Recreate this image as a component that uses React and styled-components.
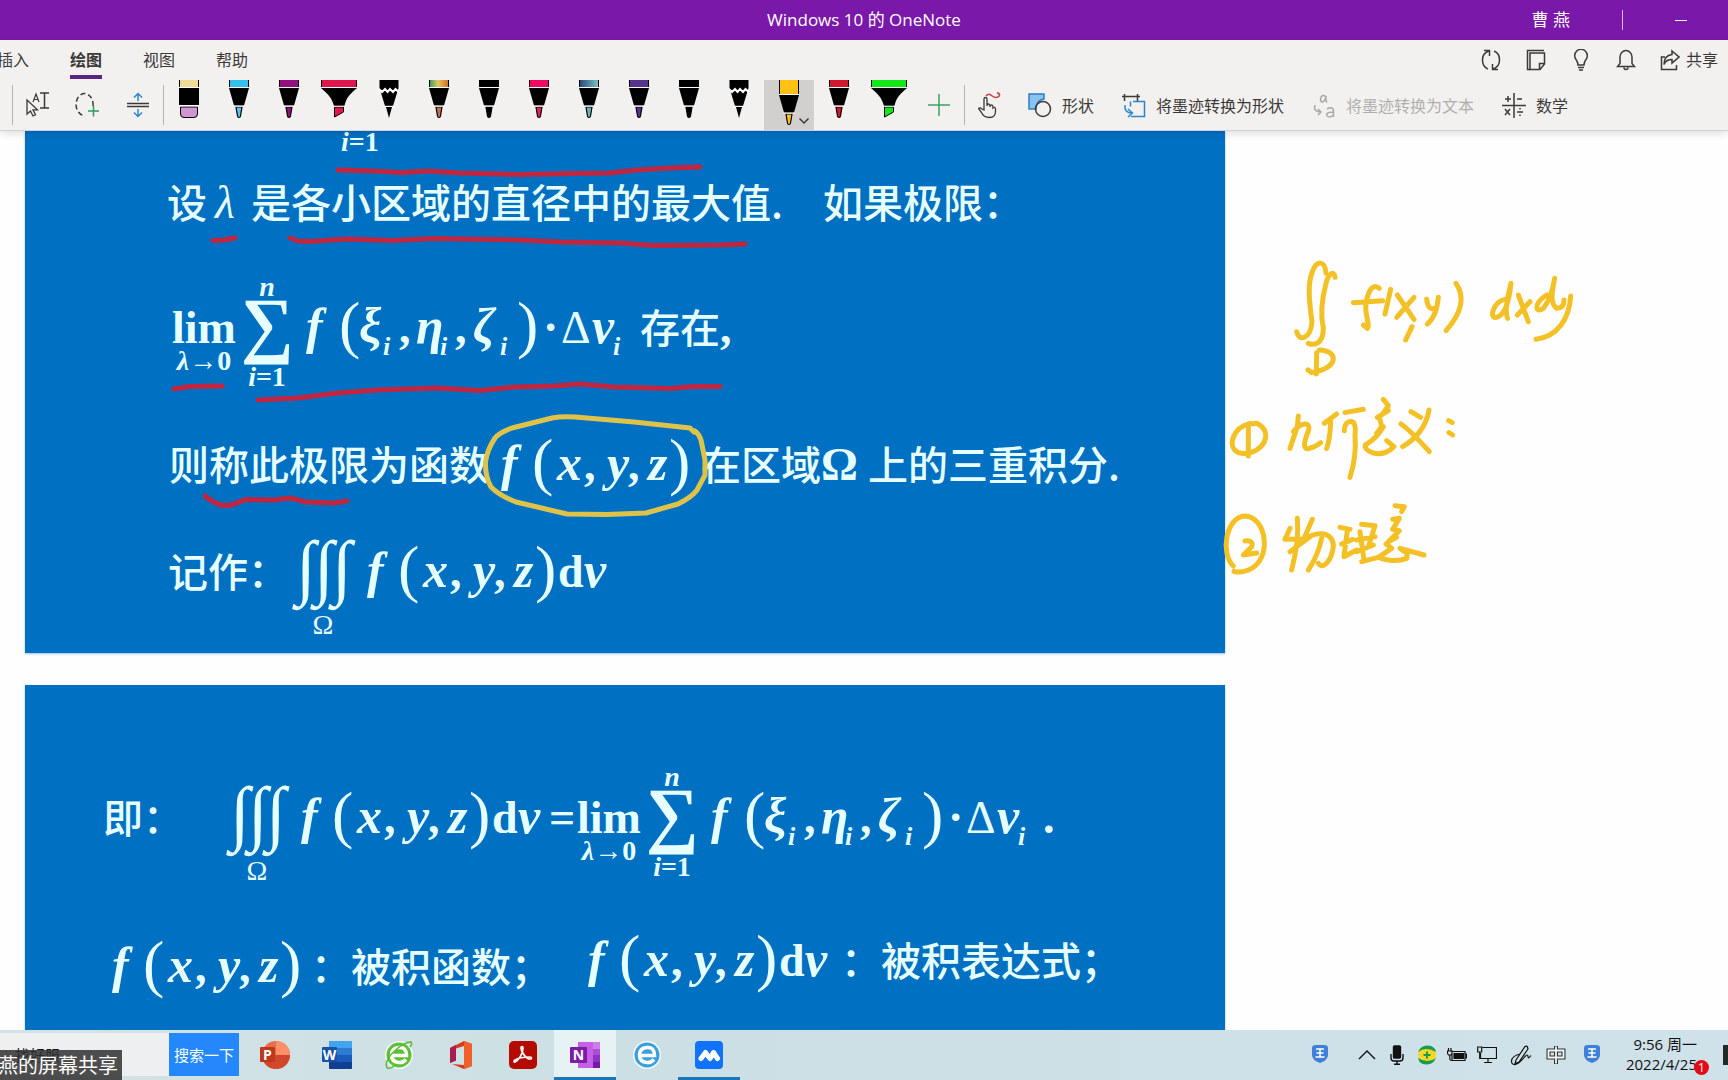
import React from 'react';
import styled, { createGlobalStyle, css } from 'styled-components';

const ui = '"Open Sans", "Noto Sans CJK SC", sans-serif';
const serif = '"Liberation Serif", "Noto Sans CJK SC", serif';

const Global = createGlobalStyle`
  * { box-sizing: border-box; }
  body { margin: 0; font-family: ${ui}; background: #fefefe; }
  button { border: 0; padding: 0; background: none; font: inherit; color: inherit; }
`;

const Window = styled.div`
  display: flex;
  flex-direction: column;
  height: 100vh;
  overflow: hidden;
`;

/* ---------- title bar ---------- */
const TitleBar = styled.header`
  display: grid;
  grid-template-columns: 1fr auto 1fr;
  align-items: center;
  height: 40px;
  flex: none;
  background: #7a19a9;
  color: #fff;
  font-size: 17px;
  line-height: 24px;
`;
const Title = styled.h1`
  grid-column: 2;
  margin: 0;
  font: inherit;
`;
const Account = styled.div`
  display: flex;
  align-items: center;
  justify-content: flex-end;
`;
const Divider = styled.span`
  width: 1px;
  height: 20px;
  margin-left: 52px;
  background: #d9b8ea;
`;
const Minimise = styled.button`
  display: flex;
  align-items: center;
  justify-content: flex-end;
  width: 105px;
  height: 40px;
  padding-right: 41px;
`;
const Dash = styled.span`
  width: 12px;
  height: 1px;
  background: #fff;
`;

/* ---------- ribbon ---------- */
const Ribbon = styled.div`
  position: relative;
  z-index: 2;
  flex: none;
  background: #f3f1f0;
  color: #3b3a39;
  border-bottom: 1px solid #cfd3d8;
  box-shadow: 0 2px 8px rgba(0, 0, 0, 0.14);
  font-size: 16px;
  line-height: 24px;
`;
const TabRow = styled.div`
  display: flex;
  justify-content: space-between;
  height: 40px;
`;
const Tabs = styled.nav`
  display: flex;
  gap: 41px;
  margin-left: -3px;
`;
const Tab = styled.button`
  height: 39px;
  padding-top: 4px;
  border-bottom: 4px solid ${(p) => (p.$active ? '#5c2482' : 'transparent')};
  font-weight: ${(p) => (p.$active ? 700 : 400)};
`;
const Actions = styled.div`
  display: flex;
  align-items: center;
  padding-right: 10px;
`;
const Action = styled.button`
  display: flex;
  align-items: center;
  justify-content: center;
  gap: 6px;
  min-width: 45px;
  height: 40px;
`;
const ShareAction = styled(Action)`
  margin-left: 11px;
`;
const ToolRow = styled.div`
  display: flex;
  align-items: flex-start;
  height: 50px;
`;
const Sep = styled.span`
  width: 1px;
  height: 40px;
  margin-top: 5px;
  background: #b5b3b2;
`;
const LeadSep = styled(Sep)`
  margin-left: 12px;
`;
const Tool = styled.button`
  display: flex;
  align-items: center;
  justify-content: center;
  width: 50px;
  height: 50px;
  background: ${(p) => (p.$selected ? '#d2d0ce' : 'transparent')};
`;
const TextTools = styled.div`
  display: flex;
  gap: 28px;
  margin-left: 13px;
`;
const TextTool = styled.button`
  display: flex;
  align-items: center;
  gap: 10px;
  height: 52px;
  color: ${(p) => (p.$off ? '#b1afad' : '#3b3a39')};
  white-space: nowrap;
`;

/* ---------- note canvas ---------- */
const Canvas = styled.main`
  position: relative;
  flex: 1;
  min-height: 0;
  overflow: hidden;
  padding-left: 25px;
`;
const Slide = styled.section`
  width: 1200px;
  height: 522px;
  padding-top: ${(p) => (p.$top || 0)}px;
  margin-bottom: 32px;
  background: #0070c3;
  color: #e6ffff;
  box-shadow: 0 1px 2px #9cc4e6;
  font-family: ${serif};
`;
const Line = styled.div`
  height: ${(p) => (p.$h || 100)}px;
  line-height: ${(p) => (p.$h || 100)}px;
  margin-top: ${(p) => (p.$mt || 0)}px;
  padding-left: ${(p) => p.$pl}px;
  font-size: 46px;
  white-space: nowrap;
`;
const Pair = styled.div`
  display: flex;
  align-items: flex-start;
  margin-top: 45px;
`;
const Han = styled.span`
  display: inline-block;
  line-height: 0;
  width: ${(p) => (p.$w ? p.$w + 'px' : 'auto')};
  font-family: "Noto Sans CJK SC", sans-serif;
  font-size: 40px;
  font-weight: 500;
`;
const Cell = styled.span`
  display: inline-block;
  width: ${(p) => p.$w}px;
  line-height: 0;
  font-size: ${(p) => (p.$it && !p.$light ? 50 : 46)}px;
  font-weight: ${(p) => (p.$light ? 400 : 700)};
  font-style: ${(p) => (p.$it ? 'italic' : 'normal')};
`;
const Paren = styled(Cell)`
  font-size: 64px;
  font-weight: 400;
  vertical-align: -3px;
`;
const Sub = styled(Cell)`
  font-size: 26px;
  font-style: italic;
  vertical-align: -12px;
`;
const Stack = styled.span`
  display: inline-flex;
  flex-direction: column;
  align-items: center;
  width: ${(p) => p.$w}px;
  margin-right: ${(p) => p.$mr}px;
  ${(p) => p.$middle && css`vertical-align: middle;`}
  ${(p) => p.$low && css`vertical-align: -4px;`}
`;
const Small = styled.span`
  font-size: 28px;
  line-height: ${(p) => p.$lh || 22}px;
  font-weight: ${(p) => (p.$light ? 400 : 700)};
`;
const Lim = styled.span`
  font-size: 46px;
  line-height: 46px;
  font-weight: 700;
`;
const Sigma = styled.span`
  font-size: 74px;
  line-height: 52px;
  padding-bottom: 16px;
  font-weight: 700;
`;
const Integral = styled.span`
  display: grid;
  grid-template-columns: repeat(3, 18px);
  font-size: 72px;
  line-height: 64px;
`;

const Fxyz = ({ dv }) => (
  <>
    <Cell $w={31} $it>f</Cell>
    <Paren $w={25}>(</Paren>
    <Cell $w={27} $it>x</Cell>
    <Cell $w={23}>,</Cell>
    <Cell $w={21} $it>y</Cell>
    <Cell $w={20}>,</Cell>
    <Cell $w={21} $it>z</Cell>
    <Paren $w={23}>)</Paren>
    {dv && (
      <>
        <Cell $w={26}>d</Cell>
        <Cell $w={23} $it>v</Cell>
      </>
    )}
  </>
);

const LimSum = () => (
  <>
    <Stack $w={64} $mr={7}>
      <Lim>lim</Lim>
      <Small $lh={20}><i>λ</i>→0</Small>
    </Stack>
    <Stack $w={48} $mr={15} $middle>
      <Small><i>n</i></Small>
      <Sigma>∑</Sigma>
      <Small><i>i</i>=1</Small>
    </Stack>
    <Cell $w={33} $it>f</Cell>
    <Paren $w={20}>(</Paren>
    <Cell $w={24} $it>ξ</Cell>
    <Sub $w={16}>i</Sub>
    <Cell $w={17}>,</Cell>
    <Cell $w={24} $it>η</Cell>
    <Sub $w={15}>i</Sub>
    <Cell $w={18}>,</Cell>
    <Cell $w={27} $it>ζ</Cell>
    <Sub $w={17}>i</Sub>
    <Paren $w={26}>)</Paren>
    <Cell $w={18}>·</Cell>
    <Cell $w={31} $light>Δ</Cell>
    <Cell $w={21} $it>v</Cell>
    <Sub $w={9}>i</Sub>
  </>
);

const TripleIntegral = () => (
  <Stack $w={58} $mr={15} $low>
    <Integral><span>∫</span><span>∫</span><span>∫</span></Integral>
    <Small $lh={52} $light>Ω</Small>
  </Stack>
);

const InkLayer = styled.svg`
  position: absolute;
  left: 0;
  top: 0;
  pointer-events: none;
`;

const Ink = () => (
  <InkLayer width="1728" height="899" viewBox="0 131 1728 899" fill="none" strokeLinecap="round" strokeLinejoin="round" aria-hidden="true">
    <g stroke="#c0263f" strokeWidth="5">
      <path d="M338 170L372 171L403 172.5L428 171L460 173L520 174.5L573 173.5L610 173L637 170L670 168L700 167" />
      <path d="M213 240.5L224 240L235 238" />
      <path d="M290 238L298 241L310 241.5L346 239L393 240.5L432 238.5L520 240L560 242L620 243L653 245.5L720 245L745 244" />
      <path d="M174 389L190 386.5L222 386" />
      <path d="M258 400L298 398L338 393L377 390L437 388L480 390.5L516 387L555 386L579 384L614 387L670 388.5L694 386.5L720 386.5" />
      <path d="M205 496Q216 505 224 505.5T245 499.500L274 500L290 498L306 502L334 503L347 501" />
    </g>
    <path stroke="#dfc349" strokeWidth="5" d="M694 432L690 428L634 422L575 417Q562 416 552 418L512 428Q499 433 495 438Q487 450 485.500 462Q485 476 491 487Q500 496 516 502L567 514L607 514.500L646 513L678 504Q692 497 697 490L705 475L705 460L701 440Q699 434 695 431" />
    <g transform="translate(1210 240) scale(.33333)" stroke="#f3c126" strokeWidth="15">
      <path d="M348 100C345 60 320 60 307 95C290 135 300 200 306 245C302 300 265 305 260 275" />
      <path d="M375 112C372 90 355 100 348 130C335 180 332 230 340 265C340 310 315 318 295 310" />
      <path d="M320 338L319 402M328 330C385 332 390 382 305 398L294 390" />
      <path d="M508 145C490 128 475 150 468 190C463 225 482 258 472 265L460 255M430 188L518 182M542 148L525 222" />
      <path d="M562 165L612 238M612 172L560 232M606 260L587 300M650 178Q655 212 672 205M685 172Q680 230 652 252M738 130Q780 190 708 272" />
      <path d="M885 178C850 185 835 238 860 232C890 225 900 160 903 130C890 180 885 220 893 235M925 165L955 245M960 185L922 225" />
      <path d="M1010 165C970 190 975 222 1000 205C1020 180 1030 140 1034 115C1025 160 1020 190 1040 205Q1062 205 1062 180M1082 168C1078 240 1040 290 978 298" />
      <path d="M120 550C70 562 48 620 85 638C140 652 188 598 158 563C145 548 135 548 128 552M115 560L115 648" />
      <path d="M265 528L262 560L240 625M250 575C275 545 302 545 296 570C280 610 278 632 298 625Q315 622 332 608" />
      <path d="M380 522L343 550M362 545Q360 600 350 625M405 518L460 508M403 572Q403 550 418 545Q440 540 435 585Q440 650 420 712" />
      <path d="M520 478L535 497L518 522M502 532L535 512M510 538L515 560L500 580M520 560Q500 595 466 615C460 632 505 655 540 630L552 620L530 602" />
      <path d="M603 515L632 532M657 510Q645 580 578 620M573 552Q600 570 658 635M716 542L727 548M717 578L728 585" />
      <path d="M70 978C30 940 48 830 105 828C170 830 190 960 115 990Q90 1000 72 994M105 903Q132 900 125 920L100 945L140 939" />
      <path d="M240 865L225 898L285 898M262 835Q268 900 245 990M240 935L300 890M307 838L278 905C310 870 372 872 370 920C365 960 340 992 325 970M335 895Q325 945 295 990" />
      <path d="M390 862L420 868M395 912L428 898M412 870L402 950L440 930M455 853L495 857L475 920M440 900L495 890M450 875L462 960M440 935L490 915M455 965L505 952" />
      <path d="M555 797L583 800L575 815M548 838L568 835L548 868L568 872L535 905L560 892M528 912L545 925L505 952Q555 970 590 955L592 940L570 925L642 945" />
    </g>
  </InkLayer>
);

/* ---------- ribbon drawings ---------- */
const gradients = (
  <defs>
    <linearGradient id="rainbow"><stop offset="0" stopColor="#2b9a6b" /><stop offset=".45" stopColor="#e8c65a" /><stop offset="1" stopColor="#cf6a2c" /></linearGradient>
    <linearGradient id="galaxy"><stop offset="0" stopColor="#29457a" /><stop offset="1" stopColor="#7fc6c4" /></linearGradient>
  </defs>
);

const Pen = ({ cap, tip, kind, down }) => {
  const o = down ? 7 : 0;
  if (kind === 'eraser')
    return (
      <svg width="50" height="50" viewBox="0 0 50 50">
        <path fill={cap} d="M15 0h20v7H15z" />
        <path d="M15.500 0v7M34.500 0v7" stroke="#000" />
        <path d="M15 8h20v17H15z" />
        <path d="M16.500 27h17v7q0 3.500-3.500 3.500H20q-3.500 0-3.500-3.500z" fill={tip} stroke="#000" />
        <path d="M15 7.500h20M15 25.800h20" stroke="#fff" />
      </svg>
    );
  if (kind === 'marker')
    return (
      <svg width="50" height="50" viewBox="0 0 50 50">
        <path fill={cap} d="M7 0h36v7H7z" />
        <path d="M7.500 0v7M42.500 0v7" stroke="#000" />
        <path d="M7 8h36C36 14 32 18 30.500 26H20C18 18 14 14 7 8z" />
        <path d="M20.500 27h9v5l-9 5z" fill={tip} stroke="#000" />
        <path d="M7 7.500h36M18 26.200h14" stroke="#fff" />
      </svg>
    );
  if (kind === 'pencil')
    return (
      <svg width="50" height="50" viewBox="0 0 50 50">
        <path d="M15.500 0h19v8L29 26h-8L15.500 8z" />
        <path d="M15 9l3 3 3-3 2.500 3 2.500-3 3 3 2.500-3 3 3" fill="none" stroke="#fff" strokeWidth="2" />
        <path d="M22 27h6l-3 11z" />
        <path d="M19 26.300h12" stroke="#fff" />
      </svg>
    );
  return (
    <svg width="50" height="50" viewBox="0 0 50 50">
      {gradients}
      <path fill={cap} d={`M15 0h20v${7 + o}H15z`} />
      <path d={`M15.500 0v${7 + o}M34.500 0v${7 + o}`} stroke="#000" />
      <g transform={`translate(0 ${o})`}>
        <path d="M15 8h20l-5 17.500H20z" />
        <path d="M22 27h6l-1.500 9q-.2 1.500-1.500 1.500t-1.500-1.500z" fill={tip} stroke="#000" strokeWidth="1.200" />
        <path d="M15 7.500h20M19 26.200h12" stroke="#fff" />
      </g>
      {down && <path d="M35.500 38.500l4.500 4.500 4.500-4.500" fill="none" stroke="#3b3a39" strokeWidth="1.500" />}
    </svg>
  );
};

const pens = [
  { name: '橡皮擦', kind: 'eraser', cap: '#f0dc97', tip: '#cf96d4' },
  { name: '浅蓝色笔', cap: '#33c1ee', tip: '#5cc3e6' },
  { name: '紫色笔', cap: '#94107e', tip: '#94107e' },
  { name: '红色荧光笔', kind: 'marker', cap: '#e0174c', tip: '#e0174c' },
  { name: '铅笔', kind: 'pencil' },
  { name: '彩虹笔', cap: 'url(#rainbow)', tip: '#c27350' },
  { name: '黑色笔', cap: '#000', tip: '#000' },
  { name: '粉红色笔', cap: '#ee0a62', tip: '#e0245e' },
  { name: '银河笔', cap: 'url(#galaxy)', tip: '#70b4b4' },
  { name: '深紫色笔', cap: '#57358c', tip: '#57358c' },
  { name: '黑色笔 2', cap: '#000', tip: '#000' },
  { name: '铅笔 2', kind: 'pencil' },
  { name: '黄色笔', cap: '#ffc114', tip: '#ffc114', down: true },
  { name: '红色笔', cap: '#d3192e', tip: '#d3192e' },
  { name: '绿色荧光笔', kind: 'marker', cap: '#12e815', tip: '#12e815' },
];

const stroke = { fill: 'none', stroke: '#3b3a39', strokeWidth: 1.5 };

const SelectIcon = () => (
  <svg width="26" height="28" viewBox="0 0 26 28" {...stroke}>
    <path d="M2 9v14l3.500-3 2.500 5 2.500-1.200-2.500-5h4.500z" strokeWidth="1.300" />
    <path d="M8 11l3-8 3 8M9 8.500h4" strokeWidth="1.200" />
    <path d="M15 2h9M19.500 2v15M15 17h9" />
  </svg>
);
const LassoIcon = () => (
  <svg width="26" height="28" viewBox="0 0 26 28" {...stroke}>
    <path d="M18 15A8.500 11 0 1 0 10 24.500" strokeDasharray="5 3" />
    <path d="M18.500 14.500v11M13 20h11" stroke="#2c9a5d" />
  </svg>
);
const SpaceIcon = () => (
  <svg width="22" height="26" viewBox="0 0 22 26" {...stroke}>
    <path d="M0 11.500h22M0 14.500h22" />
    <path d="M11 9V1.500M7 5.500l4-4 4 4M11 17v7M7 20.500l4 4 4-4" stroke="#2b88c8" />
  </svg>
);
const PlusIcon = () => (
  <svg width="22" height="50" viewBox="0 0 22 50" fill="none" stroke="#3da262" strokeWidth="1.500">
    <path d="M0 25h22M11 14v22" />
  </svg>
);
const HandIcon = () => (
  <svg width="24" height="28" viewBox="0 0 24 28" {...stroke}>
    <path d="M6 19V8q0-1.500 1.500-1.500T9 8v7q0-2 1.500-2t1.500 2v1q0-2 1.500-2t1.500 2v1q1.500-1.500 2.500.5v3q0 6-6 6t-8-5l-3-4q1.500-1.500 3.500.5z" strokeWidth="1.300" />
    <path d="M8 5c4-5 6 2 10 1.500S23 3 19 1.500" stroke="#c8424a" />
  </svg>
);
const ShapesIcon = () => (
  <svg width="24" height="26" viewBox="0 0 24 26">
    <path d="M1 1h15v5a9 9 0 0 0-8 10H1z" fill="#8cc3ee" stroke="#2b7fc2" strokeWidth="1.500" />
    <circle cx="15" cy="16" r="7.500" {...stroke} />
  </svg>
);
const ToShapeIcon = () => (
  <svg width="24" height="26" viewBox="0 0 24 26" {...stroke}>
    <path d="M0 3.500h18M2.500 1v7M15.500 1v7" />
    <path d="M11 8.500h11.500v15H9M8.500 8.500v5M3 12q-1 8 7 8M6 16l4.500 4L6 24" stroke="#2b88c8" />
  </svg>
);
const ToTextIcon = () => (
  <svg width="24" height="28" viewBox="0 0 24 28" fill="none" stroke="#aaa8a6" strokeWidth="1.500">
    <path d="M13.500 4q-4-2-5 3 0 4 3 2.500 2-1.500 2.500-5.500-.500 5 1 6.500M3 13q-2 7 6 7M6 17l3 3-3 3M15 17q5-3 6.500 1v7M21.500 20q-7 0-7 3 2 4 7 0" />
  </svg>
);
const MathIcon = () => (
  <svg width="24" height="26" viewBox="0 0 24 26" {...stroke}>
    <path d="M0 12.500h24M12 0v25M3 6h6M6 3v6M15 6h5M3 16l5 6M8 16l-5 6M15 19h6M18 15v1.500M18 21.500v1.500" />
  </svg>
);
const SyncIcon = () => (
  <svg width="20" height="22" viewBox="0 0 20 22" {...stroke}>
    <path d="M8 2Q1.500 4 1.500 11T7 20M3 1.500h5.500V7M12 20q6.500-2 6.500-9T13 2M17 20.500h-5.500V15" />
  </svg>
);
const NoteIcon = () => (
  <svg width="20" height="22" viewBox="0 0 20 22" {...stroke}>
    <path d="M1.500 18V1.500H18M4 4h14.500v11L14 20.500H4zM13.500 20v-5.500h5" />
    <path d="M1.500 18V20.500H4" />
  </svg>
);
const BulbIcon = () => (
  <svg width="18" height="22" viewBox="0 0 18 22" {...stroke}>
    <path d="M6 16q0-3-2-5.500A6.300 6.300 0 1 1 14 10.500Q12 13 12 16zM6 18.500h6M7 21h4" />
  </svg>
);
const BellIcon = () => (
  <svg width="20" height="22" viewBox="0 0 20 22" {...stroke}>
    <path d="M1.500 17.500h17L16 14.500V8A6 6.500 0 0 0 4 8v6.500zM8 18.500a2 2 0 0 0 4 0" />
  </svg>
);
const ShareIcon = () => (
  <svg width="20" height="22" viewBox="0 0 20 22" {...stroke}>
    <path d="M5 8H1.500v12.500h15V16M12 2l7 6-7 6v-3.500q-6 0-8 5 0-9 8-10z" />
  </svg>
);

/* ---------- taskbar ---------- */
const Taskbar = styled.footer`
  position: relative;
  display: flex;
  align-items: stretch;
  height: 50px;
  flex: none;
  background: linear-gradient(90deg, #d3e3e5, #cbdfe4 40%, #cfe2ea);
  font-size: 15px;
  line-height: 20px;
  color: #111;
`;
const Search = styled.form`
  display: flex;
  height: 43px;
  margin: 3px 5px 0 0;
`;
const SearchInput = styled.input`
  width: 169px;
  border: 0;
  padding: 0 0 0 15px;
  background: #edeff0;
  color: #111;
  font: 15px/20px ${ui};
`;
const SearchButton = styled.button`
  width: 70px;
  background: #2488fc;
  color: #fff;
`;
const ShareLabel = styled.div`
  position: absolute;
  left: 0;
  bottom: 0;
  width: 122px;
  height: 30px;
  overflow: hidden;
  background: rgba(50, 50, 50, 0.86);
  color: #fff;
  font-size: 20px;
  line-height: 32px;
  white-space: nowrap;
  display: flex;
  justify-content: flex-end;
  padding-right: 4px;
`;
const AppButton = styled.button`
  display: flex;
  align-items: center;
  justify-content: center;
  width: 62px;
  background: ${(p) => (p.$active ? '#e7f2f5' : 'transparent')};
  box-shadow: ${(p) => (p.$open ? 'inset 0 -3px #1b76b8' : 'none')};
`;
const Tray = styled.div`
  display: flex;
  align-items: center;
  margin-left: auto;
`;
const TrayItem = styled.button`
  display: flex;
  align-items: center;
  justify-content: center;
  width: ${(p) => p.$w || 30}px;
  height: 50px;
  margin-right: ${(p) => p.$mr || 0}px;
`;
const Clock = styled.time`
  width: 85px;
  text-align: right;
  line-height: 20px;
  padding-bottom: 2px;
  white-space: nowrap;
`;
const Notify = styled.button`
  position: relative;
  display: flex;
  align-items: center;
  justify-content: flex-end;
  width: 31px;
  height: 50px;
`;
const NotifyEdge = styled.span`
  width: 5px;
  height: 20px;
  background: #23282b;
`;
const Badge = styled.span`
  position: absolute;
  left: -3px;
  top: 30px;
  width: 15px;
  height: 15px;
  border-radius: 50%;
  background: #e30b17;
  color: #fff;
  font-size: 12px;
  line-height: 15px;
  text-align: center;
`;

const Letter = styled.text`
  font: 700 14px "Open Sans", sans-serif;
  fill: #fff;
  text-anchor: middle;
`;

const PowerPoint = () => (
  <svg width="30" height="30" viewBox="0 0 30 30">
    <circle cx="16" cy="15" r="14" fill="#ec6b4b" /><path d="M16 1a14 14 0 0 1 14 14H16z" fill="#ff8f6b" /><path d="M2 15h28a14 14 0 0 1-28 0z" fill="#d2472a" />
    <rect x="0" y="7" width="15" height="15" rx="1" fill="#bb3a1d" /><Letter x="7.500" y="19.500">P</Letter>
  </svg>
);
const Word = () => (
  <svg width="30" height="30" viewBox="0 0 30 30">
    <rect x="7" y="1" width="23" height="28" rx="1" fill="#2b7cd3" /><path d="M7 2q0-1 1-1h21q1 0 1 1v6H7z" fill="#41a5ee" /><path d="M7 15h23v7H7z" fill="#185abd" /><path d="M7 22h23v6q0 1-1 1H8q-1 0-1-1z" fill="#103f91" />
    <rect x="0" y="7" width="15" height="15" rx="1" fill="#1a51a8" /><Letter x="7.500" y="19.500">W</Letter>
  </svg>
);
const Browser = ({ green }) => (
  <svg width="30" height="30" viewBox="0 0 30 30">
    <circle cx="15" cy="15" r="14" fill="#f3fafc" />
    <circle cx="15" cy="15" r="12.500" fill={green ? '#5fbf34' : '#3a9fdc'} />
    <path d="M22 19.500Q19 23 15 22.500 7.500 22 7.500 15T15 7.500t7.500 8H9" fill="none" stroke="#fff" strokeWidth="3.500" />
    {green && <path d="M3 28Q0 21 10 11.500T27 2q1.500 2-1 5M3 28q4 1 7-2" fill="none" stroke="#5fb83a" strokeWidth="1.500" />}
  </svg>
);
const Office = () => (
  <svg width="24" height="30" viewBox="0 0 24 30">
    <path d="M1 8L15 1l8 3v22l-8 3-12-5 12 1V6L7 8.500v12L1 23z" fill="#d8391c" /><path d="M15 1l8 3v22l-8 3z" fill="#f0602a" /><path d="M1 8l6-3v15.500L1 23z" fill="#a81e4c" />
  </svg>
);
const Acrobat = () => (
  <svg width="28" height="28" viewBox="0 0 28 28">
    <rect width="28" height="28" rx="5" fill="#b30b00" />
    <path d="M6 21c3-1 8-8 8-14 0-2-2-2-2 0 0 5 6 11 9 11 2 0 2-2 0-2-5 0-12 1-15 3-1.500 1-1 2.500 0 2z" fill="none" stroke="#fff" strokeWidth="1.700" />
  </svg>
);
const OneNote = () => (
  <svg width="30" height="28" viewBox="0 0 30 28">
    <path d="M8 1h22v26H8z" fill="#c45fe6" /><path d="M23 1h7v7h-7z" fill="#cf7bed" /><path d="M23 8h7v6.500h-7z" fill="#ae4bd5" /><path d="M23 14h7v6.500h-7z" fill="#9332bf" /><path d="M23 20.500h7V27h-7z" fill="#7719aa" />
    <rect y="6" width="17" height="16" rx="1" fill="#7a1ea5" /><Letter x="8.500" y="19">N</Letter>
  </svg>
);
const Meeting = () => (
  <svg width="28" height="28" viewBox="0 0 28 28">
    <rect width="28" height="28" rx="4" fill="#1172fb" />
    <path d="M6 17.500l4.500-6 4.500 6 1-1.500 2.500-4.500 4 6" fill="none" stroke="#fff" strokeWidth="5" strokeLinecap="round" strokeLinejoin="round" />
  </svg>
);
const apps = [
  ['PowerPoint', <PowerPoint />],
  ['Word', <Word />],
  ['360 浏览器', <Browser green />],
  ['Office', <Office />],
  ['Acrobat', <Acrobat />],
  ['OneNote', <OneNote />, true, true],
  ['Internet Explorer', <Browser />],
  ['腾讯会议', <Meeting />, false, true],
];

const Shield = () => (
  <svg width="18" height="22" viewBox="0 0 18 22">
    <path d="M1 4q0-3 4-3h8q4 0 4 3v7q0 5-8 8-8-3-8-8z" fill="#3f7fd8" />
    <path d="M5 5h8M5.500 9h7M4.500 13h9M9 5v8" stroke="#fff" strokeWidth="1.500" />
  </svg>
);
const k = { fill: 'none', stroke: '#111', strokeWidth: 1.4 };

export default function App() {
  return (
    <Window>
      <Global />
      <TitleBar>
        <Title>Windows 10 的 OneNote</Title>
        <Account>
          <span>曹 燕</span>
          <Divider />
          <Minimise aria-label="最小化"><Dash /></Minimise>
        </Account>
      </TitleBar>

      <Ribbon>
        <TabRow>
          <Tabs>
            <Tab>插入</Tab>
            <Tab $active>绘图</Tab>
            <Tab>视图</Tab>
            <Tab>帮助</Tab>
          </Tabs>
          <Actions>
            <Action aria-label="同步"><SyncIcon /></Action>
            <Action aria-label="便笺"><NoteIcon /></Action>
            <Action aria-label="提示"><BulbIcon /></Action>
            <Action aria-label="通知"><BellIcon /></Action>
            <ShareAction><ShareIcon />共享</ShareAction>
          </Actions>
        </TabRow>
        <ToolRow>
          <LeadSep />
          <Tool aria-label="选择"><SelectIcon /></Tool>
          <Tool aria-label="套索选择"><LassoIcon /></Tool>
          <Tool aria-label="插入空间"><SpaceIcon /></Tool>
          <Sep />
          {pens.map((p) => (
            <Tool key={p.name} aria-label={p.name} $selected={p.down}><Pen {...p} /></Tool>
          ))}
          <Tool aria-label="添加笔"><PlusIcon /></Tool>
          <Sep />
          <Tool aria-label="用手指绘图"><HandIcon /></Tool>
          <TextTools>
            <TextTool><ShapesIcon />形状</TextTool>
            <TextTool><ToShapeIcon />将墨迹转换为形状</TextTool>
            <TextTool $off disabled><ToTextIcon />将墨迹转换为文本</TextTool>
            <TextTool><MathIcon />数学</TextTool>
          </TextTools>
        </ToolRow>
      </Ribbon>

      <Canvas>
        <Slide>
          <Line $h={10} $pl={316}><Small><i>i</i>=1</Small></Line>
          <Line $mt={12} $pl={142}>
            <Han $w={48}>设</Han>
            <Cell $w={36} $it $light>λ</Cell>
            <Han $w={572}>是各小区域的直径中的最大值.</Han>
            <Han>如果极限：</Han>
          </Line>
          <Line $mt={23} $pl={147}>
            <LimSum />
            <Cell $w={18} />
            <Han>存在</Han>
            <Cell $w={18}>,</Cell>
          </Line>
          <Line $mt={39} $pl={144}>
            <Han $w={332}>则称此极限为函数</Han>
            <Fxyz />
            <Cell $w={9} />
            <Han>在区域</Han>
            <Cell $w={47}>Ω</Cell>
            <Han>上的三重积分.</Han>
          </Line>
          <Line $mt={7} $pl={143}>
            <Han $w={126}>记作：</Han>
            <TripleIntegral />
            <Fxyz dv />
          </Line>
        </Slide>

        <Slide $top={81}>
          <Line $pl={78}>
            <Han $w={125}>即：</Han>
            <TripleIntegral />
            <Fxyz dv />
            <Cell $w={8} />
            <Cell $w={28}>=</Cell>
            <LimSum />
            <Cell $w={16} />
            <Cell $w={18}>.</Cell>
          </Line>
          <Pair>
            <Line $mt={6} $pl={87}>
              <Fxyz />
              <Cell $w={8} />
              <Han $w={277}>：被积函数；</Han>
            </Line>
            <Line $pl={0}>
              <Fxyz dv />
              <Cell $w={13} />
              <Han>：被积表达式；</Han>
            </Line>
          </Pair>
        </Slide>
        <Ink />
      </Canvas>

      <Taskbar>
        <Search onSubmit={(e) => e.preventDefault()}>
          <SearchInput aria-label="搜索" defaultValue="找好服" />
          <SearchButton>搜索一下</SearchButton>
        </Search>
        {apps.map(([name, icon, active, open]) => (
          <AppButton key={name} aria-label={name} $active={active} $open={open}>{icon}</AppButton>
        ))}
        <Tray>
          <TrayItem aria-label="输入法" $w={24} $mr={20}><Shield /></TrayItem>
          <TrayItem aria-label="显示隐藏的图标"><svg width="18" height="10" viewBox="0 0 18 10" {...k}><path d="M1 9l8-8 8 8" /></svg></TrayItem>
          <TrayItem aria-label="麦克风"><svg width="14" height="20" viewBox="0 0 14 20" {...k}><rect x="3.500" y="1" width="7" height="12" rx="1" fill="#111" /><path d="M1 9v4q0 3 3 3h6q3 0 3-3V9M7 16v3M4 19.300h6" /></svg></TrayItem>
          <TrayItem aria-label="安全卫士"><svg width="20" height="20" viewBox="0 0 20 20"><circle cx="10" cy="10" r="9" fill="#f6d829" /><path d="M1 7Q4 0 11 .500T19 7Q9 1 1 7zM19 13q-3 7-10 6.500T1 13q10 6 18 0z" fill="#1b9b4b" /><path d="M10 6.500v7M6.500 10h7" stroke="#1b9b4b" strokeWidth="2" /></svg></TrayItem>
          <TrayItem aria-label="电池"><svg width="20" height="14" viewBox="0 0 20 14" {...k} strokeWidth="1.200"><path d="M5 3.500h13v9H5zM18 6h1.500v4H18M1.500 0v3M4 0v3M.5 3h4.500v2.500L4 7H1.500L.5 5.500zM2.800 7v4q0 1.500 2 1.500" /><path d="M7 5.500h9.500v5H7z" fill="#111" /></svg></TrayItem>
          <TrayItem aria-label="网络"><svg width="20" height="18" viewBox="0 0 20 18" {...k} strokeWidth="1.200"><path d="M5.500 1.500h14v11h-16V7M11 12.500V16M7 16.500h8M.700 1h4v5h-4zM2.700 6v7" /></svg></TrayItem>
          <TrayItem aria-label="手写笔" $w={38}><svg width="22" height="22" viewBox="0 0 22 22" {...k} strokeWidth="1.200"><path d="M6 16L15 2.500q1.500-1 2.500.500L18 5 9 18l-4 1.500zM10 10q-8 2-8.500 7 0 4 4 3.500Q9 20 15 12.500q3-3 3 0t3-1" /></svg></TrayItem>
          <TrayItem aria-label="中文模式" $w={32}><svg width="20" height="20" viewBox="0 0 20 20" fill="none"><path d="M2.500 5.500h15v7h-15zM10 1v18" stroke="#333" strokeWidth="4" /><path d="M2.500 5.500h15v7h-15zM10 1.500v17" stroke="#f4f8f9" strokeWidth="1.800" /></svg></TrayItem>
          <TrayItem aria-label="输入法设置" $w={40}><Shield /></TrayItem>
          <Clock dateTime="2022-04-25T09:56">9:56 周一<br />2022/4/25</Clock>
          <Notify aria-label="通知中心"><Badge>1</Badge><NotifyEdge /></Notify>
        </Tray>
        <ShareLabel>燕的屏幕共享</ShareLabel>
      </Taskbar>
    </Window>
  );
}
